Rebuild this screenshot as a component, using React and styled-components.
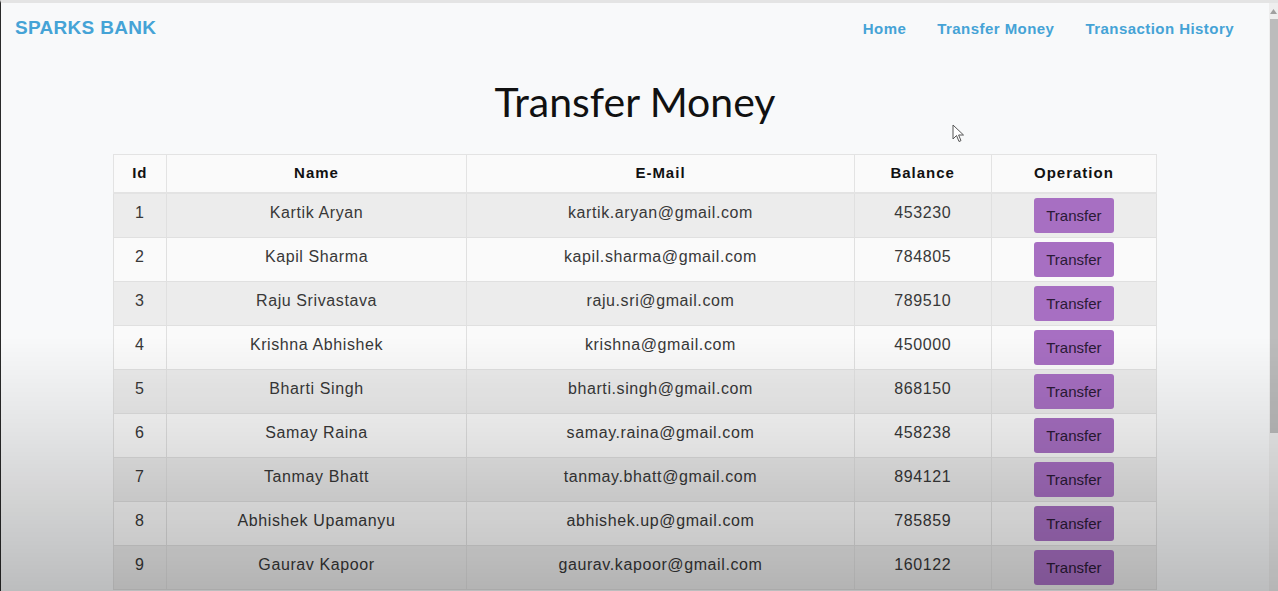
import React from "react";
import styled, { createGlobalStyle } from "styled-components";

const customers = [
  { id: 1, name: "Kartik Aryan", email: "kartik.aryan@gmail.com", balance: 453230 },
  { id: 2, name: "Kapil Sharma", email: "kapil.sharma@gmail.com", balance: 784805 },
  { id: 3, name: "Raju Srivastava", email: "raju.sri@gmail.com", balance: 789510 },
  { id: 4, name: "Krishna Abhishek", email: "krishna@gmail.com", balance: 450000 },
  { id: 5, name: "Bharti Singh", email: "bharti.singh@gmail.com", balance: 868150 },
  { id: 6, name: "Samay Raina", email: "samay.raina@gmail.com", balance: 458238 },
  { id: 7, name: "Tanmay Bhatt", email: "tanmay.bhatt@gmail.com", balance: 894121 },
  { id: 8, name: "Abhishek Upamanyu", email: "abhishek.up@gmail.com", balance: 785859 },
  { id: 9, name: "Gaurav Kapoor", email: "gaurav.kapoor@gmail.com", balance: 160122 },
];

const GlobalStyle = createGlobalStyle`
  html, body {
    margin: 0;
    height: 100%;
    overflow: hidden;
    background: #f8f9fa;
    font-family: "Liberation Sans", Arial, sans-serif;
  }
`;

const Frame = styled.div`
  display: flex;
  height: 591px;
  border-left: 1px solid #2a2a2a;
  border-top: 3px solid #e4e4e4;
  box-sizing: border-box;
  overflow: hidden;
`;

const Page = styled.div`
  flex: 1;
  background: #f8f9fa;
`;

const Navbar = styled.nav`
  display: flex;
  align-items: center;
  justify-content: space-between;
  height: 50px;
  padding: 0 35px 0 14px;
`;

const Brand = styled.a`
  font-size: 19px;
  font-weight: 700;
  color: #45a3d6;
  letter-spacing: 0.3px;
`;

const Links = styled.div`
  display: flex;
  gap: 31px;
`;

const NavLink = styled.a`
  font-size: 15px;
  font-weight: 700;
  color: #45a3d6;
  letter-spacing: 0.45px;
`;

const Title = styled.h1`
  margin: 24px 0 27px;
  text-align: center;
  font-family: "Lato", sans-serif;
  font-weight: 400;
  font-size: 41px;
  color: #111;
  line-height: 50px;
`;

const Table = styled.table`
  width: 1044px;
  margin: 0 auto;
  border-collapse: collapse;
  color: #383838;
  font-size: 16px;
  letter-spacing: 0.6px;
`;

const HeadCell = styled.th`
  height: 34px;
  padding: 0 0 3px;
  font-size: 15px;
  font-weight: 700;
  color: #111;
  letter-spacing: 1px;
  border: 1px solid #e3e3e3;
  border-bottom-width: 2px;
  background: #fafafa;
  width: ${(p) => p.$w}px;
`;

const Row = styled.tr`
  background: ${(p) => (p.$odd ? "#ececec" : "#fafafa")};
`;

const Cell = styled.td`
  height: 38px;
  padding: 0 0 5px;
  text-align: center;
  border: 1px solid #e0e0e0;
`;

const ButtonCell = styled(Cell)`
  padding: 0;
  height: 43px;
`;

const TransferButton = styled.button`
  display: block;
  margin: 0 auto;
  width: 80px;
  height: 35px;
  border: none;
  border-radius: 3px;
  background: #a76fc2;
  color: #2a1a36;
  font-family: "Liberation Sans", Arial, sans-serif;
  font-size: 15px;
  cursor: pointer;
`;

const Scrollbar = styled.div`
  width: 9px;
  background: #eeeeee;
  display: flex;
  flex-direction: column;
  align-items: center;
`;

const ScrollArrow = styled.div`
  height: 16px;
  display: flex;
  align-items: center;
`;

const ScrollThumb = styled.div`
  width: 8px;
  height: 414px;
  background: #bcbcbc;
`;

const Shade = styled.div`
  position: fixed;
  inset: 0;
  pointer-events: none;
  background: linear-gradient(
    to bottom,
    rgba(0, 0, 0, 0) 0%,
    rgba(0, 0, 0, 0) 57%,
    rgba(0, 0, 0, 0.08) 72%,
    rgba(0, 0, 0, 0.24) 100%
  );
`;

const Pointer = styled.svg`
  position: fixed;
  left: 952px;
  top: 124px;
  pointer-events: none;
`;

const columns = [
  ["Id", 52],
  ["Name", 302],
  ["E-Mail", 388],
  ["Balance", 137],
  ["Operation", 165],
];

export default function App() {
  return (
    <>
      <GlobalStyle />
      <Frame>
        <Page>
          <Navbar>
            <Brand>SPARKS BANK</Brand>
            <Links>
              <NavLink>Home</NavLink>
              <NavLink>Transfer Money</NavLink>
              <NavLink>Transaction History</NavLink>
            </Links>
          </Navbar>
          <Title>Transfer Money</Title>
          <Table>
            <thead>
              <tr>
                {columns.map(([label, w]) => (
                  <HeadCell key={label} $w={w}>
                    {label}
                  </HeadCell>
                ))}
              </tr>
            </thead>
            <tbody>
              {customers.map((c) => (
                <Row key={c.id} $odd={c.id % 2 === 1}>
                  <Cell>{c.id}</Cell>
                  <Cell>{c.name}</Cell>
                  <Cell>{c.email}</Cell>
                  <Cell>{c.balance}</Cell>
                  <ButtonCell>
                    <TransferButton>Transfer</TransferButton>
                  </ButtonCell>
                </Row>
              ))}
            </tbody>
          </Table>
        </Page>
        <Scrollbar>
          <ScrollArrow>
            <svg width="7" height="5" viewBox="0 0 7 5">
              <path d="M0 5 L3.5 0 L7 5 Z" fill="#a0a0a0" />
            </svg>
          </ScrollArrow>
          <ScrollThumb />
        </Scrollbar>
      </Frame>
      <Shade />
      <Pointer width="14" height="20" viewBox="0 0 14 20">
        <path
          d="M1 1 L1 15 L4.5 11.5 L7 17.5 L9 16.6 L6.6 11 L11.5 11 Z"
          fill="#fff"
          stroke="#555"
          strokeWidth="1"
          strokeLinejoin="round"
        />
      </Pointer>
    </>
  );
}
